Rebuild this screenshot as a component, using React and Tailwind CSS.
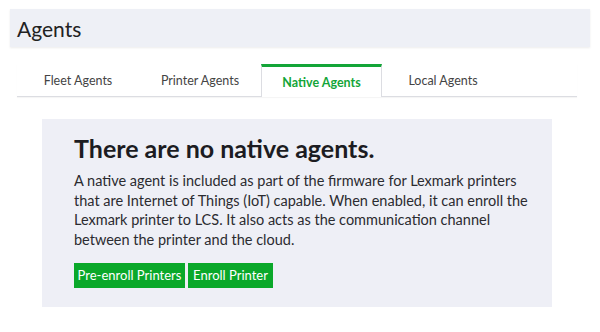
import React, { useState } from 'react';

const tabs = ['Fleet Agents', 'Printer Agents', 'Native Agents', 'Local Agents'];

export default function App() {
  const [active, setActive] = useState('Native Agents');

  return (
    <div className="w-[600px] h-[332px] bg-white overflow-hidden" style={{ fontFamily: 'Lato, "Noto Sans", sans-serif' }}>
      {/* Page header */}
      <div className="mx-[10px] mt-[9px] h-[38px] bg-[#eef0f6] shadow-[0_1px_2px_rgba(0,0,0,0.08)] flex items-center px-[7px]">
        <h1 className="text-[21px] text-[#222] leading-none">Agents</h1>
      </div>

      {/* Tabs */}
      <div className="mx-[17px] mt-[17px] w-[560px] flex border-b border-[#dcdde2] shadow-[0_1px_1px_rgba(0,0,0,0.04)]">
        {tabs.map((tab) => {
          const isActive = tab === active;
          return (
            <button
              key={tab}
              onClick={() => setActive(tab)}
              className={
                isActive
                  ? 'w-[121px] h-[33px] -mb-px pt-[2px] bg-white border-t-[3px] border-t-[#13a538] border-x border-x-[#dcdde2] text-[12.5px] font-bold text-[#13a538]'
                  : 'w-[122px] h-[32px] pt-[3px] text-[12.5px] text-[#444]'
              }
            >
              {tab}
            </button>
          );
        })}
      </div>

      {/* Empty state */}
      <div className="ml-[42px] mt-[22px] w-[510px] h-[188px] bg-[#eeeff6] pl-[32px] pt-[13px]">
        <h2 className="text-[25px] font-bold text-[#1c1c22] leading-[32px]">There are no native agents.</h2>
        <p className="mt-[7px] text-[14.5px] leading-[19.5px] text-[#2b2b30] w-[465px]">
          A native agent is included as part of the firmware for Lexmark printers that are Internet of Things (IoT) capable. When enabled, it can enroll the Lexmark printer to LCS. It also acts as the communication channel between the printer and the cloud.
        </p>
        <div className="flex gap-[3px] mt-[14px]">
          <button className="h-[25px] w-[111px] bg-[#0aa82a] text-white text-[13px]">Pre-enroll Printers</button>
          <button className="h-[25px] w-[85px] bg-[#0aa82a] text-white text-[13px]">Enroll Printer</button>
        </div>
      </div>
    </div>
  );
}
